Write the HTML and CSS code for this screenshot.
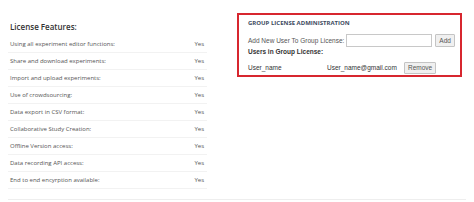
FILE: index.html
```html
<!DOCTYPE html>
<html lang="en">
<head>
    <meta charset="UTF-8">
    <meta name="viewport" content="width=device-width, initial-scale=1.0">
    <title>License</title>
    <link rel="stylesheet" href="styles.css">
</head>
<body>
    <div class="page">
        <div class="features">
            <h3 class="title">License Features:</h3>
            <ul class="list">
                <li class="row"><span>Using all experiment editor functions:</span><span>Yes</span></li>
                <li class="row"><span>Share and download experiments:</span><span>Yes</span></li>
                <li class="row"><span>Import and upload experiments:</span><span>Yes</span></li>
                <li class="row"><span>Use of crowdsourcing:</span><span>Yes</span></li>
                <li class="row"><span>Data export in CSV format:</span><span>Yes</span></li>
                <li class="row"><span>Collaborative Study Creation:</span><span>Yes</span></li>
                <li class="row"><span>Offline Version access:</span><span>Yes</span></li>
                <li class="row"><span>Data recording API access:</span><span>Yes</span></li>
                <li class="row"><span>End to end encyrption available:</span><span>Yes</span></li>
            </ul>
        </div>
        <div class="admin">
            <div class="admin-title">GROUP LICENSE ADMINISTRATION</div>
            <div class="add-line">
                <span class="label">Add New User To Group License:</span>
                <input class="field" type="text">
                <button class="btn">Add</button>
            </div>
            <div class="sub">Users in Group License:</div>
            <div class="user">
                <span class="user-name">User_name</span>
                <span class="user-mail">User_name@gmail.com</span>
                <button class="btn">Remove</button>
            </div>
        </div>
    </div>
    <div class="rule"></div>
</body>
</html>
```

FILE: styles.css
```css
* {
    margin: 0;
    padding: 0;
    box-sizing: border-box;
}

body {
    background: #fff;
    font-family: "Open Sans", sans-serif;
    color: #444;
}

li {
    list-style: none;
}

.page {
    display: flex;
    align-items: flex-start;
    padding: 0 12px 0 8px;
}

.features {
    width: 199px;
    padding-top: 21px;
}

.title {
    font-size: 8px;
    font-weight: 600;
    color: #333;
    padding-left: 2px;
    height: 15px;
    line-height: 12px;
}

.row {
    display: flex;
    justify-content: space-between;
    height: 17px;
    line-height: 16px;
    font-size: 6px;
    color: #555;
    padding: 0 2px;
    border-bottom: 1px solid #f2f2f2;
}

.row span:last-child {
    padding-right: 1px;
}

.admin {
    margin-left: 30px;
    margin-top: 13px;
    width: 225px;
    height: 64px;
    border: 2px solid #d7262f;
    padding: 2px 9px 0 9px;
    font-family: "Liberation Sans", Arial, sans-serif;
    font-size: 6.5px;
    color: #555;
}

.admin-title {
    font-family: "Open Sans", sans-serif;
    font-weight: 700;
    font-size: 6px;
    color: #3c4a5e;
    height: 13px;
    line-height: 13px;
}

.add-line {
    display: flex;
    align-items: center;
    height: 13px;
    margin-top: 4px;
}

.label {
    white-space: nowrap;
    margin-right: 2px;
}

.field {
    width: 86px;
    height: 13px;
    border: 1px solid #c8c8c8;
    background: #fff;
}

.btn {
    font-family: "Liberation Sans", Arial, sans-serif;
    font-size: 6.5px;
    color: #555;
    height: 13px;
    padding: 0 3px;
    border: 1px solid #c4c4c4;
    background: #f0f0f0;
    border-radius: 1px;
    margin-left: 3px;
}

.sub {
    font-weight: 700;
    color: #333;
    height: 10px;
    line-height: 10px;
}

.user {
    display: flex;
    align-items: center;
    height: 13px;
    margin-top: 4px;
    color: #333;
}

.user-name {
    width: 79px;
}

.user-mail {
    width: 77px;
}

.user .btn {
    margin-left: 0;
    height: 12px;
}

.rule {
    margin: 10px 8px 0 8px;
    border-top: 1px solid #eee;
}
```
